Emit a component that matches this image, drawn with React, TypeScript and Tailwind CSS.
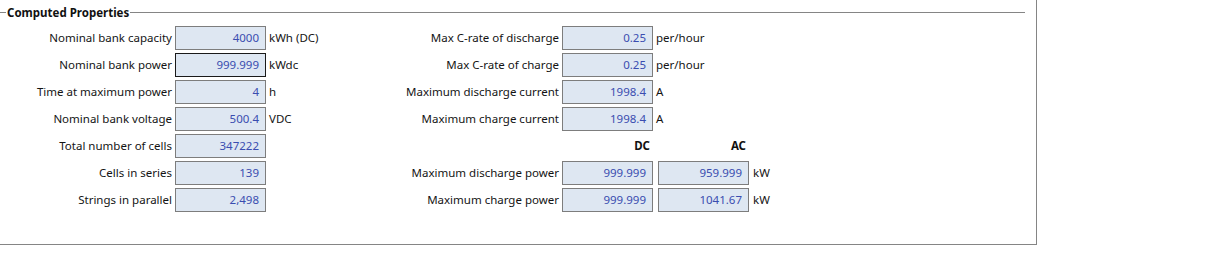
const font = { fontFamily: '"Noto Sans", "Liberation Sans", Arial, sans-serif' };

type Row = { label: string; value?: string; unit?: string; focused?: boolean };

const leftRows: Row[] = [
  { label: "Nominal bank capacity", value: "4000", unit: "kWh (DC)" },
  { label: "Nominal bank power", value: "999.999", unit: "kWdc", focused: true },
  { label: "Time at maximum power", value: "4", unit: "h" },
  { label: "Nominal bank voltage", value: "500.4", unit: "VDC" },
  { label: "Total number of cells", value: "347222" },
  { label: "Cells in series", value: "139" },
  { label: "Strings in parallel", value: "2,498" },
];

const rightRows: Row[] = [
  { label: "Max C-rate of discharge", value: "0.25", unit: "per/hour" },
  { label: "Max C-rate of charge", value: "0.25", unit: "per/hour" },
  { label: "Maximum discharge current", value: "1998.4", unit: "A" },
  { label: "Maximum charge current", value: "1998.4", unit: "A" },
];

const powerRows = [
  { label: "Maximum discharge power", dc: "999.999", ac: "959.999" },
  { label: "Maximum charge power", dc: "999.999", ac: "1041.67" },
];

function Box({ value, focused }: { value?: string; focused?: boolean }) {
  return (
    <div
      className={`flex h-[24px] w-[91px] items-center justify-end border bg-[#dee7f2] pr-[6px] text-[#3a4db0] ${
        focused ? "border-[#1a1a1a]" : "border-[#7d7d7d]"
      }`}
    >
      {value}
    </div>
  );
}

function Field({ row, labelW }: { row: Row; labelW: string }) {
  return (
    <div className="flex h-[24px] items-center">
      <div className={`${labelW} text-right text-[#141414]`}>{row.label}</div>
      <div className="ml-[3px]">
        <Box value={row.value} focused={row.focused} />
      </div>
      {row.unit && <div className="ml-[3px] text-[#141414]">{row.unit}</div>}
    </div>
  );
}

export default function App() {
  return (
    <div className="h-[255px] w-[1212px] bg-white text-[11.5px]" style={font}>
      <div className="h-[245px] w-[1037px] border-b border-r border-[#858585]">
        <div className="flex h-[26px] items-center pb-[1px]">
          <div className="h-px w-[6px] bg-[#858585]" />
          <div className="px-[1px] font-bold text-[#111]">Computed Properties</div>
          <div className="h-px w-[895px] bg-[#858585]" />
        </div>
        <div className="flex">
          <div className="flex w-[386px] flex-col gap-[3px]">
            {leftRows.map((r) => (
              <Field key={r.label} row={r} labelW="w-[172px]" />
            ))}
          </div>
          <div className="flex flex-col gap-[3px]">
            {rightRows.map((r) => (
              <Field key={r.label} row={r} labelW="w-[173px]" />
            ))}
            <div className="flex h-[24px] items-center font-bold text-[#111]">
              <div className="w-[176px]" />
              <div className="w-[88px] text-right">DC</div>
              <div className="w-[96px] text-right">AC</div>
            </div>
            {powerRows.map((r) => (
              <div key={r.label} className="flex h-[24px] items-center">
                <div className="w-[173px] text-right text-[#141414]">{r.label}</div>
                <div className="ml-[3px]">
                  <Box value={r.dc} />
                </div>
                <div className="ml-[5px]">
                  <Box value={r.ac} />
                </div>
                <div className="ml-[4px] text-[#141414]">kW</div>
              </div>
            ))}
          </div>
        </div>
      </div>
    </div>
  );
}
